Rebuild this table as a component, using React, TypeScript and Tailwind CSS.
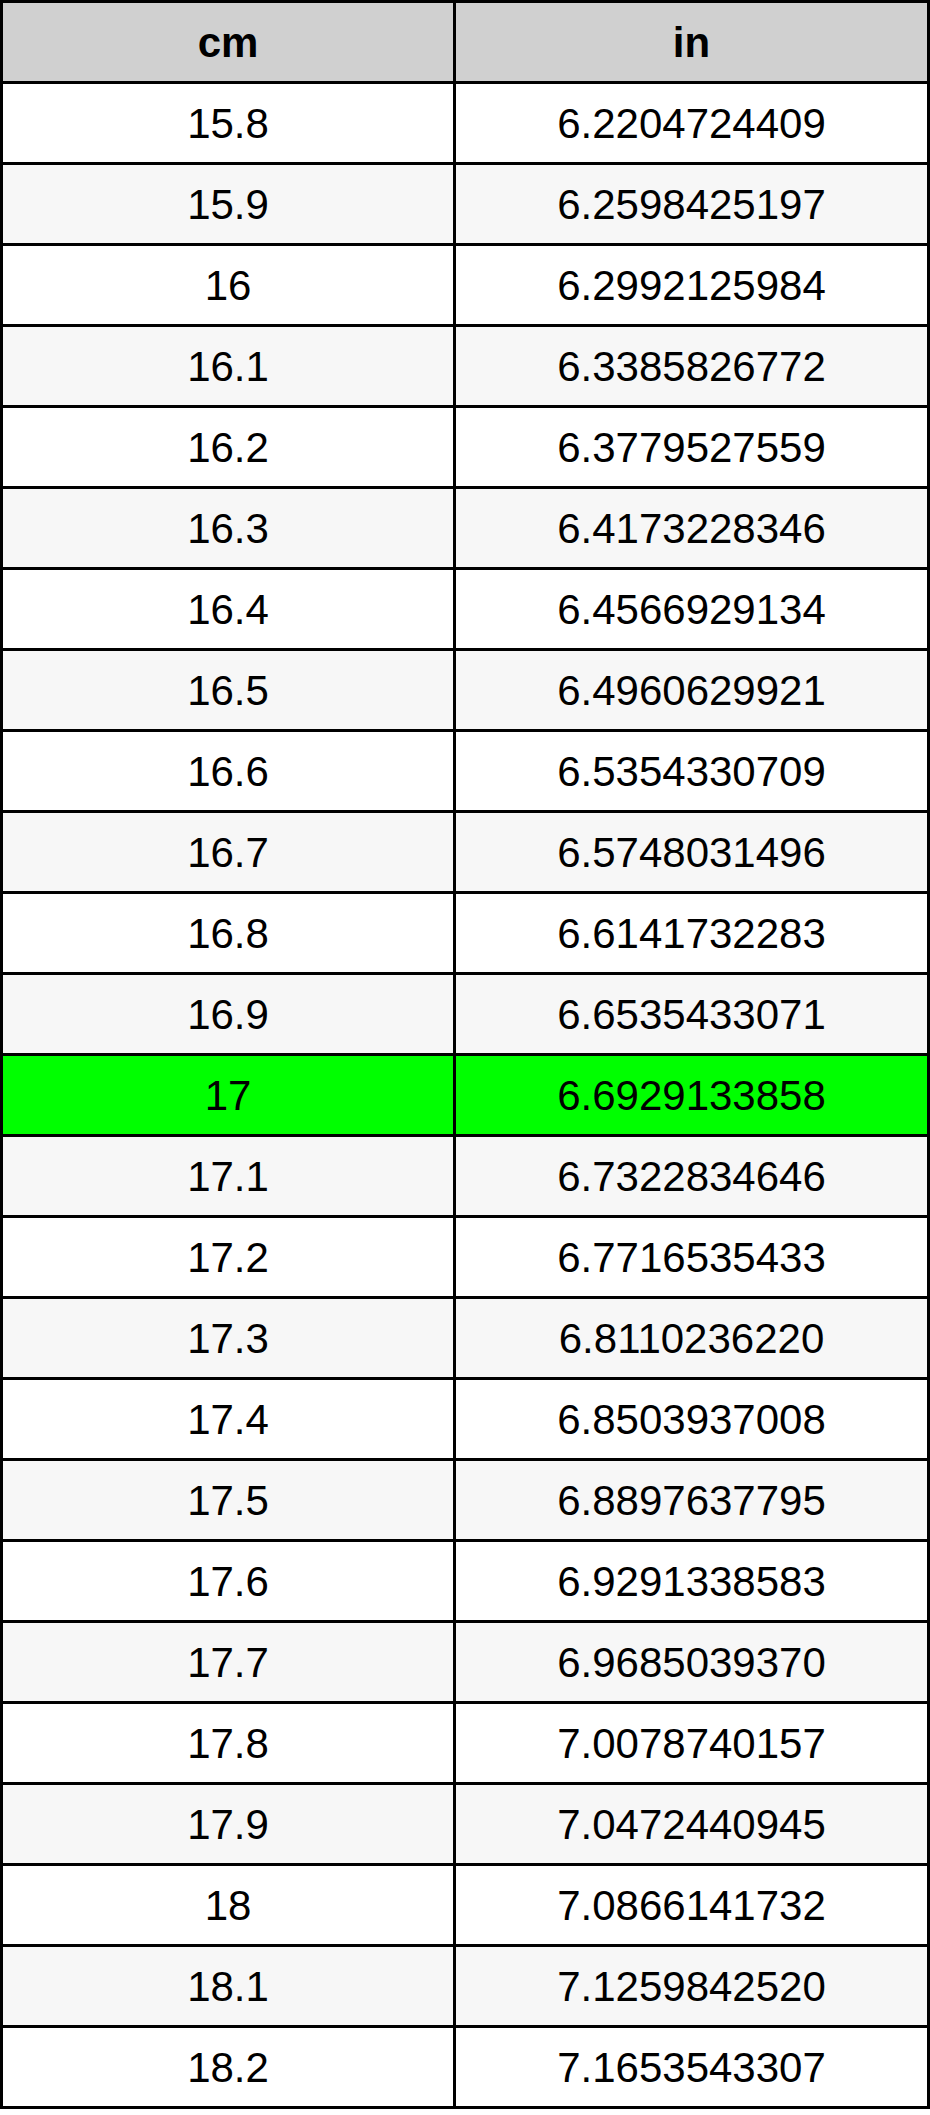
import React from "react";

const rows: [string, string][] = [
  ["15.8", "6.2204724409"],
  ["15.9", "6.2598425197"],
  ["16", "6.2992125984"],
  ["16.1", "6.3385826772"],
  ["16.2", "6.3779527559"],
  ["16.3", "6.4173228346"],
  ["16.4", "6.4566929134"],
  ["16.5", "6.4960629921"],
  ["16.6", "6.5354330709"],
  ["16.7", "6.5748031496"],
  ["16.8", "6.6141732283"],
  ["16.9", "6.6535433071"],
  ["17", "6.6929133858"],
  ["17.1", "6.7322834646"],
  ["17.2", "6.7716535433"],
  ["17.3", "6.8110236220"],
  ["17.4", "6.8503937008"],
  ["17.5", "6.8897637795"],
  ["17.6", "6.9291338583"],
  ["17.7", "6.9685039370"],
  ["17.8", "7.0078740157"],
  ["17.9", "7.0472440945"],
  ["18", "7.0866141732"],
  ["18.1", "7.1259842520"],
  ["18.2", "7.1653543307"],
];

const App = () => {
  return (
    <div className="w-[930px] bg-white font-['Liberation_Sans',Arial,sans-serif] text-[42px] text-black">
      <div className="grid grid-cols-[450px_471px] gap-[3px] bg-black p-[3px] auto-rows-[78px]">
        {/* Header */}
        <div className="flex items-center justify-center bg-[#d0d0d0] font-bold">cm</div>
        <div className="flex items-center justify-center bg-[#d0d0d0] font-bold">in</div>

        {rows.map(([cm, inch], i) => {
          const bg =
            cm === "17" ? "bg-[#00ff00]" : i % 2 === 0 ? "bg-white" : "bg-[#f7f7f7]";
          return (
            <React.Fragment key={cm}>
              <div className={`flex items-center justify-center ${bg}`}>{cm}</div>
              <div className={`flex items-center justify-center ${bg}`}>{inch}</div>
            </React.Fragment>
          );
        })}
      </div>
    </div>
  );
};

export default App;
